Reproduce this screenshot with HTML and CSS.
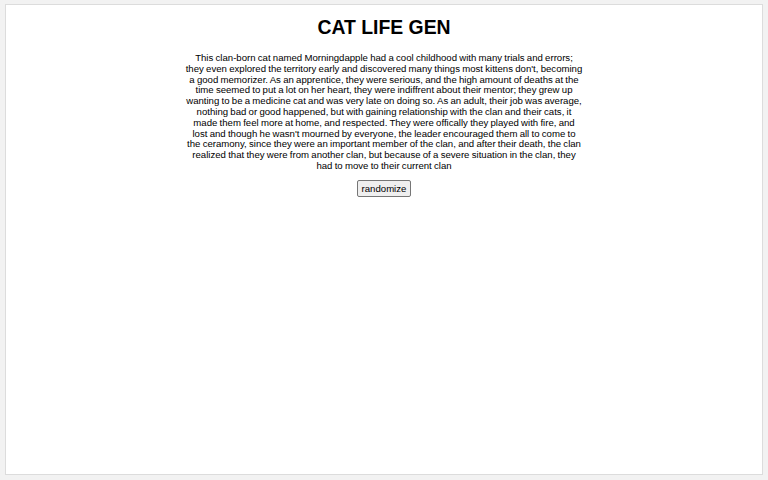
FILE: index.html
```html
<!DOCTYPE html>
<html lang="en">
<head>
    <meta charset="UTF-8">
    <meta name="viewport" content="width=device-width, initial-scale=1.0">
    <title>Cat Life Gen</title>
    <link rel="stylesheet" href="styles.css">
</head>
<body>
    <div class="page">
        <h1 class="title">CAT LIFE GEN</h1>
        <p class="story" id="story">This clan-born cat named Morningdapple had a cool childhood with many trials and errors; they even explored the territory early and discovered many things most kittens don't, becoming a good memorizer. As an apprentice, they were serious, and the high amount of deaths at the time seemed to put a lot on her heart, they were indiffrent about their mentor; they grew up wanting to be a medicine cat and was very late on doing so. As an adult, their job was average, nothing bad or good happened, but with gaining relationship with the clan and their cats, it made them feel more at home, and respected. They were offically they played with fire, and lost and though he wasn't mourned by everyone, the leader encouraged them all to come to the ceramony, since they were an important member of the clan, and after their death, the clan realized that they were from another clan, but because of a severe situation in the clan, they had to move to their current clan</p>
        <button class="btn-randomize" onclick="randomize()">randomize</button>
    </div>

    <script>
        function randomize() {
            // story generator hook
        }
    </script>
</body>
</html>
```

FILE: styles.css
```css
* {
    box-sizing: border-box;
}

html, body {
    height: 100%;
}

body {
    margin: 0;
    padding: 4px 5px 5px 5px;
    background: #f2f2f2;
    font-family: 'Liberation Sans', Arial, sans-serif;
    color: #000;
}

.page {
    height: 100%;
    background: #fff;
    border: 1px solid #dcdcdc;
    display: flex;
    flex-direction: column;
    align-items: center;
    padding-top: 10px;
}

.title {
    margin: 0;
    font-size: 19.4px;
    font-weight: bold;
    line-height: 24px;
}

.story {
    width: 397px;
    margin: 14px 0 0 0;
    font-size: 9.6px;
    line-height: 10.8px;
    word-spacing: -0.4px;
    text-align: center;
}

.btn-randomize {
    margin-top: 8px;
    font-family: 'Liberation Sans', Arial, sans-serif;
    font-size: 9.6px;
    padding: 2px 4px;
    background: #efefef;
    border: 1px solid #767676;
    border-radius: 2px;
}
```
